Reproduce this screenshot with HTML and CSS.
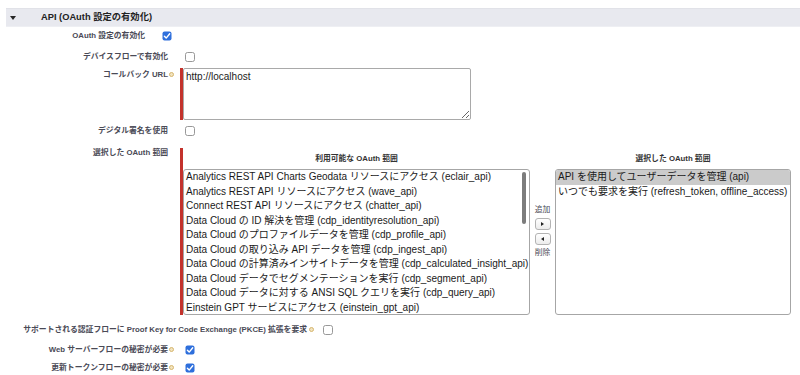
FILE: index.html
```html
<!DOCTYPE html>
<html lang="ja">
<head>
<meta charset="utf-8">
<title>API (OAuth 設定の有効化)</title>
<link rel="stylesheet" href="styles.css">
</head>
<body>
<div class="page">
  <div class="section-header">
    <span class="twisty"></span>
    <h3 class="section-title">API (OAuth 設定の有効化)</h3>
  </div>

  <div class="row row-enable">
    <div class="label label-narrow">OAuth 設定の有効化</div>
    <div class="field field-check"><svg class="cb" viewBox="0 0 10 10" width="10" height="10"><rect x="0.5" y="0.5" width="9" height="9" rx="2" fill="#2e6fdc"/><path d="M2.4 5.2 L4.2 7.1 L7.7 2.7" fill="none" stroke="#fff" stroke-width="1.4" stroke-linecap="round" stroke-linejoin="round"/></svg></div>
  </div>

  <div class="row row-device">
    <div class="label">デバイスフローで有効化</div>
    <div class="field field-check"><svg class="cb" viewBox="0 0 10 10" width="10" height="10"><rect x="0.5" y="0.5" width="9" height="9" rx="2" fill="#fff" stroke="#8c8c8c" stroke-width="0.9"/></svg></div>
  </div>

  <div class="row row-callback">
    <div class="label label-help label-top">コールバック URL<span class="help"></span></div>
    <div class="field required">
      <textarea class="url-input">http://localhost</textarea>
    </div>
  </div>

  <div class="row row-signature">
    <div class="label">デジタル署名を使用</div>
    <div class="field field-check"><svg class="cb" viewBox="0 0 10 10" width="10" height="10"><rect x="0.5" y="0.5" width="9" height="9" rx="2" fill="#fff" stroke="#8c8c8c" stroke-width="0.9"/></svg></div>
  </div>

  <div class="row row-scopes">
    <div class="label label-top">選択した OAuth 範囲</div>
    <div class="field required scopes">
      <div class="pick-col pick-available">
        <div class="pick-title">利用可能な OAuth 範囲</div>
        <div class="pick-list">
          <div class="pick-item">Analytics REST API Charts Geodata リソースにアクセス (eclair_api)</div>
          <div class="pick-item">Analytics REST API リソースにアクセス (wave_api)</div>
          <div class="pick-item">Connect REST API リソースにアクセス (chatter_api)</div>
          <div class="pick-item">Data Cloud の ID 解決を管理 (cdp_identityresolution_api)</div>
          <div class="pick-item">Data Cloud のプロファイルデータを管理 (cdp_profile_api)</div>
          <div class="pick-item">Data Cloud の取り込み API データを管理 (cdp_ingest_api)</div>
          <div class="pick-item">Data Cloud の計算済みインサイトデータを管理 (cdp_calculated_insight_api)</div>
          <div class="pick-item">Data Cloud データでセグメンテーションを実行 (cdp_segment_api)</div>
          <div class="pick-item">Data Cloud データに対する ANSI SQL クエリを実行 (cdp_query_api)</div>
          <div class="pick-item">Einstein GPT サービスにアクセス (einstein_gpt_api)</div>
          <span class="scroll-thumb"></span>
        </div>
      </div>
      <div class="btn-col">
        <span class="btn-label">追加</span>
        <span class="move-btn"><span class="tri tri-right"></span></span>
        <span class="move-btn"><span class="tri tri-left"></span></span>
        <span class="btn-label btn-label-bottom">削除</span>
      </div>
      <div class="pick-col pick-selected">
        <div class="pick-title">選択した OAuth 範囲</div>
        <div class="pick-list">
          <div class="pick-item is-selected">API を使用してユーザーデータを管理 (api)</div>
          <div class="pick-item">いつでも要求を実行 (refresh_token, offline_access)</div>
        </div>
      </div>
    </div>
  </div>

  <div class="row row-pkce">
    <div class="label label-wide">サポートされる認証フローに Proof Key for Code Exchange (PKCE) 拡張を要求<span class="help"></span></div>
    <div class="field field-check"><svg class="cb" viewBox="0 0 10 10" width="10" height="10"><rect x="0.5" y="0.5" width="9" height="9" rx="2" fill="#fff" stroke="#8c8c8c" stroke-width="0.9"/></svg></div>
  </div>

  <div class="row row-web">
    <div class="label label-help">Web サーバーフローの秘密が必要<span class="help"></span></div>
    <div class="field field-check"><svg class="cb" viewBox="0 0 10 10" width="10" height="10"><rect x="0.5" y="0.5" width="9" height="9" rx="2" fill="#2e6fdc"/><path d="M2.4 5.2 L4.2 7.1 L7.7 2.7" fill="none" stroke="#fff" stroke-width="1.4" stroke-linecap="round" stroke-linejoin="round"/></svg></div>
  </div>

  <div class="row row-refresh">
    <div class="label label-help">更新トークンフローの秘密が必要<span class="help"></span></div>
    <div class="field field-check"><svg class="cb" viewBox="0 0 10 10" width="10" height="10"><rect x="0.5" y="0.5" width="9" height="9" rx="2" fill="#2e6fdc"/><path d="M2.4 5.2 L4.2 7.1 L7.7 2.7" fill="none" stroke="#fff" stroke-width="1.4" stroke-linecap="round" stroke-linejoin="round"/></svg></div>
  </div>
</div>
</body>
</html>
```

FILE: styles.css
```css
* { box-sizing: border-box; }

html, body {
  margin: 0;
  padding: 0;
  background: #ffffff;
  overflow: hidden;
}

body {
  font-family: "Liberation Sans", "Noto Sans CJK JP", sans-serif;
  color: #1b1b1b;
}

.page {
  padding: 8px 0 0 6px;
}

/* section header */
.section-header {
  display: flex;
  align-items: center;
  height: 19px;
  background: #e8e9ef;
  border-top: 1px solid #e1e2e8;
  border-bottom: 1px solid #eeeff3;
}

.twisty {
  width: 0;
  height: 0;
  margin-left: 4px;
  border-left: 3px solid transparent;
  border-right: 3px solid transparent;
  border-top: 4px solid #262626;
}

.section-title {
  margin: 0 0 0 25px;
  font-size: 9.3px;
  font-weight: bold;
  color: #222;
  line-height: 1;
}

/* rows */
.row {
  display: flex;
  align-items: center;
}

.label {
  flex: 0 0 174px;
  width: 174px;
  padding-right: 12px;
  text-align: right;
  font-size: 7.8px;
  line-height: 10px;
  font-weight: bold;
  color: #4a4a56;
  white-space: nowrap;
}

.label-narrow {
  flex-basis: 151px;
  width: 151px;
}

.label-help {
  padding-right: 6px;
}

.label-wide {
  flex-basis: 312px;
  width: 312px;
  padding-right: 4px;
}

.label-top {
  align-self: flex-start;
}

.help {
  display: inline-block;
  width: 5px;
  height: 5px;
  margin-left: 1px;
  border-radius: 50%;
  background: #f1e3bf;
  border: 1px solid #d6b56d;
  vertical-align: 0;
}

.label-wide .help { margin-left: 2px; }

.field-check .cb {
  display: block;
  margin-left: 5px;
}

.row-enable { height: 18px; }
.row-device { height: 23px; }
.row-callback { align-items: flex-start; padding-bottom: 4px; }
.row-callback .label { padding-top: 2px; }
.row-signature { height: 14px; }
.row-scopes { align-items: flex-start; padding-top: 10px; }
.row-pkce { height: 18px; margin-top: 6px; }
.row-web { height: 18px; margin-top: 2px; }
.row-refresh { height: 18px; }

/* required fields */
.required {
  border-left: 3px solid #c3322c;
}

.url-input {
  display: block;
  width: 288px;
  height: 52px;
  margin: 0;
  padding: 2px 2px;
  border: 1px solid #a9a9a9;
  border-radius: 2px;
  font-family: "Liberation Sans", "Noto Sans CJK JP", sans-serif;
  font-size: 10px;
  line-height: 12px;
  color: #1b1b1b;
  background: #fff;
  resize: both;
}

/* scopes picker */
.scopes {
  display: flex;
  align-items: flex-start;
}

.pick-col {
  display: flex;
  flex-direction: column;
}

.pick-available { width: 347px; }
.pick-selected { width: 236px; }

.pick-title {
  height: 21px;
  line-height: 21px;
  text-align: center;
  font-size: 7.8px;
  font-weight: bold;
  color: #333;
}

.pick-list {
  position: relative;
  height: 146px;
  border: 1px solid #a6a6a6;
  border-radius: 3px;
  background: #fff;
  overflow: hidden;
}

.pick-item {
  height: 14.5px;
  line-height: 14.5px;
  padding-left: 2px;
  font-size: 10px;
  white-space: nowrap;
  color: #1a1a1a;
}

.pick-item.is-selected {
  background: #cbcbcb;
}

.scroll-thumb {
  position: absolute;
  top: 2px;
  right: 3px;
  width: 4px;
  height: 52px;
  border-radius: 3px;
  background: #7c7c7c;
}

.btn-col {
  width: 25px;
  display: flex;
  flex-direction: column;
  align-items: center;
  padding-top: 57px;
}

.btn-label {
  font-size: 7.8px;
  line-height: 10px;
  color: #4a4a56;
}

.btn-label-bottom { margin-top: 3px; }

.move-btn {
  display: flex;
  align-items: center;
  justify-content: center;
  width: 16px;
  height: 12px;
  margin-top: 3px;
  border: 1px solid #b3b3b3;
  border-radius: 3px;
  background: linear-gradient(#ffffff, #ececec);
}

.tri {
  width: 0;
  height: 0;
  border-top: 2.5px solid transparent;
  border-bottom: 2.5px solid transparent;
}

.tri-right { border-left: 3.5px solid #222; }
.tri-left { border-right: 3.5px solid #222; }
```
